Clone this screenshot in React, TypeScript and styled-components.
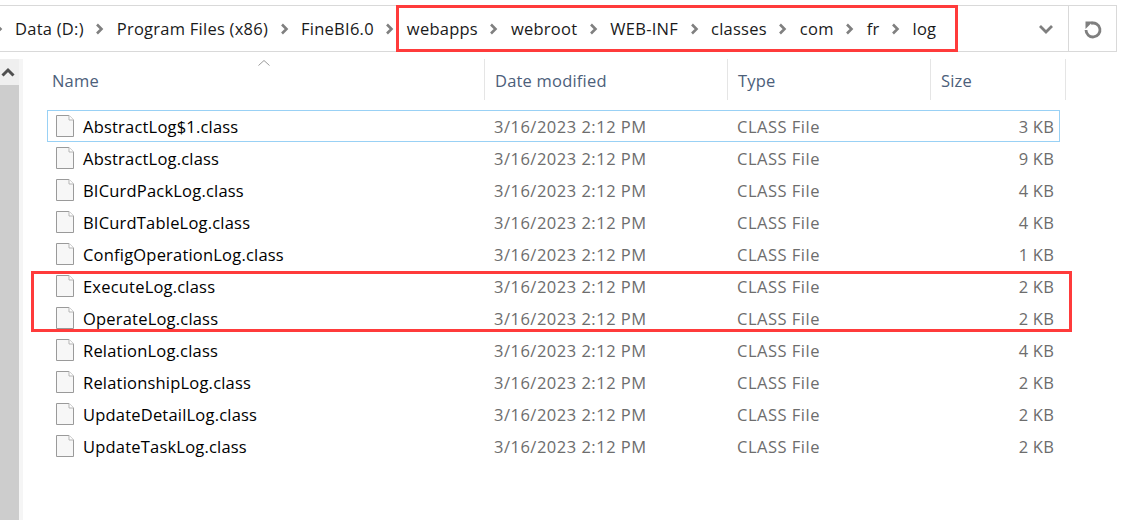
import React from "react";
import styled, {createGlobalStyle} from "styled-components";

const GlobalStyle = createGlobalStyle`
  html, body {
    margin: 0;
    padding: 0;
    background: #fff;
    overflow: hidden;
  }
  body {
    font-family: "Open Sans", "Noto Sans", sans-serif;
    font-size: 16.5px;
    letter-spacing: 0.2px;
  }
`

const Page = styled.div`
  position: relative;
  width: 1126px;
  height: 520px;
  overflow: hidden;
  padding-top: 5px;
  box-sizing: border-box;
`

const AddressBar = styled.div`
  display: flex;
  align-items: stretch;
  width: 1117px;
  height: 47px;
  box-sizing: border-box;
  border: 1px solid #d9d9d9;
  border-left: none;
`

const Crumbs = styled.div`
  flex: 1;
  display: flex;
  align-items: center;
  margin-left: -18px;
  min-width: 0;
  letter-spacing: 0.25px;
`

const Crumb = styled.span`
  color: #1a1a1a;
  white-space: nowrap;
`

const ChevronBox = styled.span`
  display: flex;
  justify-content: center;
  flex: none;
  width: 33px;
  padding-right: 1px;
  box-sizing: border-box;
  color: #808080;
`

const DropButton = styled.div`
  width: 46px;
  padding-left: 2px;
  box-sizing: border-box;
  display: flex;
  align-items: center;
  justify-content: center;
  color: #7f7f7f;
`

const RefreshButton = styled.div`
  width: 47px;
  display: flex;
  align-items: center;
  justify-content: center;
  border-left: 1px solid #d9d9d9;
  color: #7f7f7f;
`

const Body = styled.div`
  display: flex;
  height: 468px;
  margin-top: 7px;
`

const ScrollTrack = styled.div`
  width: 19px;
  background: #cdcdcd;
  border-right: 4px solid #f5f5f5;
`

const ScrollUp = styled.div`
  height: 26px;
  background: #efefef;
  display: flex;
  align-items: center;
  justify-content: center;
  padding-right: 4px;
  color: #505050;
`

const Content = styled.div`
  flex: 1;
  min-width: 0;
`

const HeaderRow = styled.div`
  display: flex;
  height: 41px;
  padding-left: 28px;
`

const HeaderCell = styled.div<{$w: number, $first?: boolean}>`
  width: ${p => p.$w}px;
  box-sizing: border-box;
  padding-left: ${p => (p.$first ? 1 : 10)}px;
  padding-top: 10px;
  color: #4c607a;
  border-right: 1px solid #e5e5e5;
`

const SortCaret = styled.svg`
  position: absolute;
  left: 258px;
  top: 60px;
`

const Rows = styled.div`
  margin-top: 10px;
  margin-left: 24px;
  width: 1013px;
`

const Row = styled.div<{$focus?: boolean}>`
  display: grid;
  grid-template-columns: 35px 411px 243px 1fr 60px;
  align-items: center;
  height: 32px;
  box-sizing: border-box;
  border: 1px solid ${p => (p.$focus ? "#99d1f5" : "transparent")};
`

const IconCell = styled.div`
  display: flex;
  justify-content: flex-end;
  padding-right: 9px;
`

const NameCell = styled.div`
  color: #000;
  padding-top: 1px;
`

const MetaCell = styled.div`
  color: #6d6d6d;
  padding-top: 1px;
  letter-spacing: 0.5px;
`

const SizeCell = styled.div`
  color: #6d6d6d;
  padding-top: 1px;
  text-align: right;
  padding-right: 5px;
`

const Highlight = styled.div<{$x: number, $y: number, $w: number, $h: number}>`
  position: absolute;
  left: ${p => p.$x}px;
  top: ${p => p.$y}px;
  width: ${p => p.$w}px;
  height: ${p => p.$h}px;
  box-sizing: border-box;
  border: 3px solid #ff3b3b;
`

const Chevron = () => (
  <svg width="9" height="12" viewBox="0 0 9 12">
    <path d="M2 1.5 L6.5 6 L2 10.5" fill="none" stroke="currentColor" strokeWidth="2.6"/>
  </svg>
)

const FileIcon = () => (
  <svg width="18" height="22" viewBox="0 0 18 22">
    <path d="M0.5 0.5 H13 L17.5 5 V21.5 H0.5 Z" fill="#f7f7f7" stroke="#9a9a9a"/>
    <path d="M13 0.5 V5 H17.5" fill="#fff" stroke="#b5b5b5"/>
  </svg>
)

const crumbs = [
  "",
  "Data (D:)",
  "Program Files (x86)",
  "FineBI6.0",
  "webapps",
  "webroot",
  "WEB-INF",
  "classes",
  "com",
  "fr",
  "log",
]

const files: [string, string][] = [
  ["AbstractLog$1.class", "3 KB"],
  ["AbstractLog.class", "9 KB"],
  ["BICurdPackLog.class", "4 KB"],
  ["BICurdTableLog.class", "4 KB"],
  ["ConfigOperationLog.class", "1 KB"],
  ["ExecuteLog.class", "2 KB"],
  ["OperateLog.class", "2 KB"],
  ["RelationLog.class", "4 KB"],
  ["RelationshipLog.class", "2 KB"],
  ["UpdateDetailLog.class", "2 KB"],
  ["UpdateTaskLog.class", "2 KB"],
]

const App = () => (
  <Page>
    <GlobalStyle/>
    <AddressBar>
      <Crumbs>
        {crumbs.map((label, i) => (
          <React.Fragment key={i}>
            {label && <Crumb>{label}</Crumb>}
            {i < crumbs.length - 1 && <ChevronBox><Chevron/></ChevronBox>}
          </React.Fragment>
        ))}
      </Crumbs>
      <DropButton>
        <svg width="16" height="10" viewBox="0 0 16 10">
          <path d="M2 2 L8 8 L14 2" fill="none" stroke="currentColor" strokeWidth="2.8"/>
        </svg>
      </DropButton>
      <RefreshButton>
        <svg width="20" height="20" viewBox="0 0 20 20">
          <path d="M8 4.3 A7 7 0 1 1 3 11" fill="none" stroke="currentColor" strokeWidth="2.8"/>
          <path d="M2.5 2.5 H10 L2.5 10 Z" fill="currentColor"/>
        </svg>
      </RefreshButton>
    </AddressBar>
    <Body>
      <ScrollTrack>
        <ScrollUp>
          <svg width="14" height="10" viewBox="0 0 14 10">
            <path d="M1.5 8.5 L7 3 L12.5 8.5" fill="none" stroke="currentColor" strokeWidth="3"/>
          </svg>
        </ScrollUp>
      </ScrollTrack>
      <Content>
        <HeaderRow>
          <HeaderCell $w={434} $first>Name</HeaderCell>
          <HeaderCell $w={243}>Date modified</HeaderCell>
          <HeaderCell $w={203}>Type</HeaderCell>
          <HeaderCell $w={135}>Size</HeaderCell>
        </HeaderRow>
        <Rows>
          {files.map(([name, size], i) => (
            <Row key={name} $focus={i === 0}>
              <IconCell><FileIcon/></IconCell>
              <NameCell>{name}</NameCell>
              <MetaCell>3/16/2023 2:12 PM</MetaCell>
              <MetaCell>CLASS File</MetaCell>
              <SizeCell>{size}</SizeCell>
            </Row>
          ))}
        </Rows>
      </Content>
    </Body>
    <SortCaret width="12" height="6" viewBox="0 0 12 6">
      <path d="M0.5 5.5 L6 0.5 L11.5 5.5" fill="none" stroke="#999" strokeWidth="1"/>
    </SortCaret>
    <Highlight $x={396} $y={5} $w={562} $h={47}/>
    <Highlight $x={31} $y={271} $w={1041} $h={61}/>
  </Page>
)

export default App
